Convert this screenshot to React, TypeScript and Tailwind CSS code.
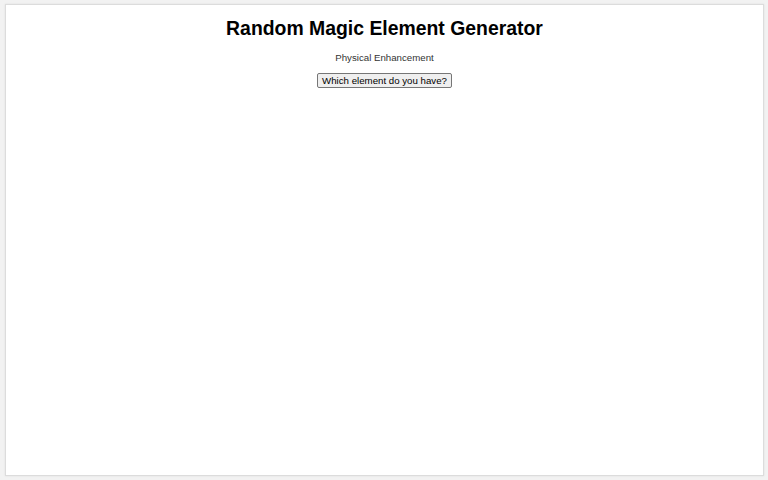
export default function App() {
  return (
    <div className="h-[480px] w-[768px] bg-[#f2f2f2] pt-[4px] pl-[5px] pr-[4px] pb-[4px] font-['Liberation_Sans',Arial,sans-serif]">
      <div className="flex h-[472px] flex-col items-center border border-[#dcdcdc] bg-white pt-[12px] text-black shadow-[0_0_2px_rgba(0,0,0,0.08)]">
        <h1 className="text-[19.4px] leading-[23px] font-bold">Random Magic Element Generator</h1>
        <p className="mt-[12px] text-[9.7px] leading-[12px] text-[#333]">Physical Enhancement</p>
        <button className="mt-[9px] h-[15px] rounded-[2px] border border-[#767676] bg-[#efefef] px-[4px] text-[9.7px] leading-[12px] text-black">
          Which element do you have?
        </button>
      </div>
    </div>
  );
}
